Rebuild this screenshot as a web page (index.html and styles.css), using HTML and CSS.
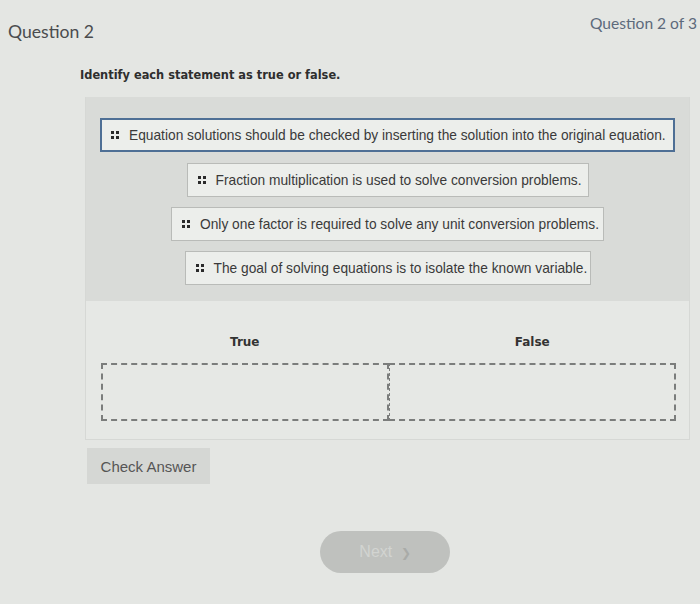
FILE: index.html
```html
<!DOCTYPE html>
<html>
<head>
<meta charset="utf-8">
<link rel="stylesheet" href="styles.css">
</head>
<body>
<div class="page">
  <header class="top">
    <h1 class="qtitle">Question 2</h1>
    <div class="qcount">Question 2 of 3</div>
  </header>
  <p class="prompt">Identify each statement as true or false.</p>
  <section class="board">
    <div class="bank">
      <div class="item focused"><span class="grip"></span>Equation solutions should be checked by inserting the solution into the original equation.</div>
      <div class="item w2"><span class="grip"></span>Fraction multiplication is used to solve conversion problems.</div>
      <div class="item w3"><span class="grip"></span>Only one factor is required to solve any unit conversion problems.</div>
      <div class="item w4"><span class="grip"></span>The goal of solving equations is to isolate the known variable.</div>
    </div>
    <div class="targets">
      <div class="col">
        <div class="label">True</div>
        <div class="zone"></div>
      </div>
      <div class="col">
        <div class="label">False</div>
        <div class="zone"></div>
      </div>
    </div>
  </section>
  <div class="actions">
    <button class="check">Check Answer</button>
  </div>
  <div class="nav">
    <button class="next">Next <span class="chev">&#x276F;</span></button>
  </div>
</div>
</body>
</html>
```
FILE: styles.css
```css
html, body {
  margin: 0;
  padding: 0;
}
body {
  background: #e4e6e3;
  width: 700px;
  height: 604px;
  overflow: hidden;
  font-family: "Liberation Sans", Arial, sans-serif;
  color: #333;
}
.top {
  display: flex;
  justify-content: space-between;
  align-items: flex-start;
  padding: 14px 3px 0 8px;
  height: 48px;
  box-sizing: border-box;
}
.qtitle {
  margin: 7px 0 0 0;
  font-family: Lato, "Open Sans", sans-serif;
  font-weight: 400;
  font-size: 17.6px;
  color: #4a4c4e;
}
.qcount {
  font-family: Lato, "Open Sans", sans-serif;
  font-size: 15.6px;
  color: #5d6a7c;
}
.prompt {
  margin: 19px 0 0 80px;
  font-family: "DejaVu Sans", Verdana, sans-serif;
  font-weight: 700;
  font-size: 11.4px;
  color: #2e2e2e;
  line-height: 16px;
}
.board {
  margin: 14px 10px 0 85px;
  border: 1px solid #d6d8d5;
  border-top: none;
  background: #e6e8e5;
}
.bank {
  background: #d9dbd8;
  display: flex;
  flex-direction: column;
  align-items: center;
  gap: 10px;
  padding: 21px 0 16px;
}
.item {
  box-sizing: border-box;
  height: 34px;
  display: flex;
  align-items: center;
  padding: 0 6px 0 10px;
  background: #eceeeb;
  border: 1px solid #b9bbb8;
  font-size: 13.75px;
  color: #3a3a3a;
  white-space: nowrap;
}
.item.focused {
  border: 2px solid #4e6f95;
  padding-left: 9px;
  width: 575px;
  margin-bottom: 1px;
}
.w2 { width: 402px; }
.w3 { width: 433px; }
.w4 { width: 406px; }
.grip {
  position: relative;
  width: 8px;
  height: 8px;
  margin-right: 10px;
  flex: none;
}
.grip::before {
  content: "";
  position: absolute;
  left: 0;
  top: 0;
  width: 3px;
  height: 3px;
  background: #2a2a2a;
  box-shadow: 5px 0 0 #2a2a2a, 0 5px 0 #2a2a2a, 5px 5px 0 #2a2a2a;
}
.targets {
  display: flex;
  padding: 34px 13px 18px 15px;
}
.col {
  flex: 1;
  display: flex;
  flex-direction: column;
  align-items: center;
}
.label {
  font-family: "DejaVu Sans", Verdana, sans-serif;
  font-weight: 700;
  font-size: 12px;
  color: #333;
  height: 16px;
  margin-bottom: 12px;
}
.zone {
  align-self: stretch;
  height: 58px;
  border: 2px dashed #7b7d7c;
  box-sizing: border-box;
}
.col + .col .zone {
  border-left-width: 1px;
}
.actions {
  padding: 8px 0 0 87px;
}
.check {
  width: 123px;
  height: 36px;
  border: none;
  background: #d5d7d4;
  color: #555;
  font-family: "Liberation Sans", Arial, sans-serif;
  font-size: 15px;
  padding: 0;
}
.nav {
  display: flex;
  justify-content: center;
  padding: 47px 0 0 70px;
}
.next {
  width: 130px;
  height: 42px;
  border: none;
  border-radius: 21px;
  background: #bfc1be;
  color: #d2d4d1;
  font-family: "Liberation Sans", Arial, sans-serif;
  font-size: 16px;
  padding: 0;
}
.chev {
  font-size: 12px;
  color: #a9aba8;
  margin-left: 4px;
}
```
